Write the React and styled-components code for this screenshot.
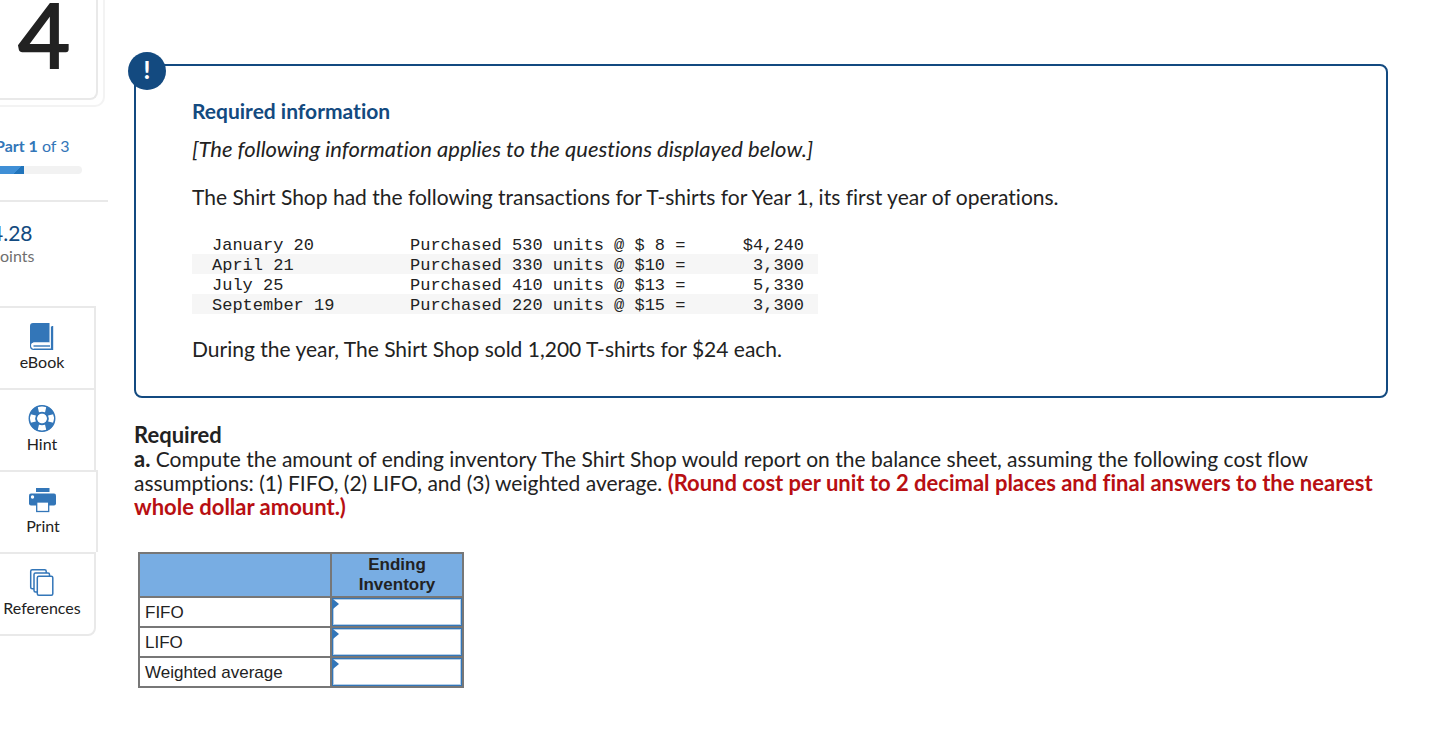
import React from "react";
import styled, { createGlobalStyle } from "styled-components";

const blue = "#3376b8";
const navy = "#134a80";
const line = "#e9e9e9";

const GlobalStyle = createGlobalStyle`
  *, *::before, *::after { box-sizing: border-box; }
  body {
    margin: 0;
    background: #fff;
    color: #222;
    font-family: Lato, "Liberation Sans", sans-serif;
    font-variant-ligatures: none;
    overflow-x: hidden;
  }
`;

const Page = styled.div`
  display: flex;
  align-items: flex-start;
`;

const Sidebar = styled.aside`
  flex: 0 0 120px;
  margin-left: -12px;
`;

const NumberFrame = styled.div`
  width: 117px;
  padding-right: 5px;
  padding-bottom: 5px;
  border: 2px solid #f3f3f3;
  border-top: 0;
  border-radius: 0 0 10px 10px;
`;

const QuestionNumber = styled.div`
  height: 100px;
  border: 2px solid ${line};
  border-top: 0;
  border-radius: 0 0 8px 8px;
  text-align: center;
  font-size: 90px;
  line-height: 66px;
  -webkit-text-stroke: 2px #222;
`;

const PartBlock = styled.div`
  padding: 29px 26px 26px 7px;
  border-bottom: 2px solid ${line};
`;

const PartText = styled.div`
  color: ${blue};
  font-size: 16px;
  line-height: 20px;
`;

const Track = styled.div`
  height: 8px;
  margin-top: 10px;
  border-radius: 4px;
  background: #f2f2f2;
  overflow: hidden;
`;

const Fill = styled.div`
  width: 33.33%;
  height: 8px;
  background: linear-gradient(135deg, #3f8fd6 0 72%, #2174bb 72%);
`;

const Points = styled.div`
  padding: 19px 0 39px 3px;
`;

const PointValue = styled.div`
  color: ${navy};
  font-size: 21px;
  line-height: 24px;
`;

const PointLabel = styled.div`
  color: #6f6f6f;
  font-size: 16px;
  line-height: 22px;
`;

const Tools = styled.nav`
  display: flex;
  flex-direction: column;
  align-items: flex-start;
`;

const Tool = styled.button`
  display: flex;
  flex-direction: column;
  align-items: center;
  gap: 1px;
  width: ${(p) => (p.$wide ? "110px" : "108px")};
  padding: 14px 0 16px;
  border: solid ${line};
  border-width: 2px 2px ${(p) => (p.$last ? "2px" : "0")};
  border-radius: ${(p) => (p.$last ? "0 0 8px 8px" : "0")};
  background: #fff;
  color: #222;
  font-family: inherit;
  font-size: 16px;
  line-height: 20px;
  cursor: pointer;

  svg { display: block; width: 28px; height: 29px; }
`;

const Main = styled.main`
  flex: 1;
  min-width: 0;
  padding: 64px 52px 60px 26px;
  font-size: 21px;
  line-height: 24px;
`;

const InfoCard = styled.section`
  position: relative;
  padding: 33px 56px 35px;
  border: 2px solid ${navy};
  border-radius: 8px;
`;

const Alert = styled.span`
  position: absolute;
  top: -14px;
  left: -8px;
  width: 38px;
  height: 38px;
  border-radius: 50%;
  background: ${navy};
  color: #fff;
  font-size: 24px;
  font-weight: 900;
  line-height: 36px;
  text-align: center;
`;

const Heading = styled.h2`
  margin: 0;
  color: ${navy};
  font-size: 21px;
  font-weight: 700;
  line-height: 24px;
`;

const Note = styled.p`
  margin: 14px 0 24px;
  font-size: 22px;
  font-style: italic;
`;

const Text = styled.p`
  margin: 0;
`;

const Strong = styled.strong`
  color: ${(p) => (p.$alert ? "#b80f12" : "inherit")};
  font-size: 22px;
`;

const Transactions = styled.table`
  width: 626px;
  margin: 25px 0 23px;
  border-collapse: collapse;
  table-layout: fixed;
  font-family: "Liberation Mono", monospace;
  font-size: 17px;
  line-height: 17px;

  tr:nth-child(even) { background: #f6f6f6; }
  td { padding: 3px 0 0; white-space: pre; }
  td:first-child { width: 218px; padding-left: 20px; }
  td:last-child { width: 110px; padding-right: 14px; text-align: right; }
`;

const Question = styled.section`
  padding-top: 25px;
`;

const Answers = styled.table`
  width: 326px;
  margin: 33px 0 0 4px;
  border-collapse: collapse;
  table-layout: fixed;
  font-family: "Liberation Sans", Arial, sans-serif;
  font-size: 17px;
  line-height: 20px;

  th, td { border: 2px solid #777; padding: 0; }
  thead th { height: 44px; background: #78ade3; font-weight: 700; vertical-align: top; }
  thead th:last-child { width: 132px; padding: 1px 24px 0; }
  tbody th { height: 30px; padding: 2px 0 0 5px; font-weight: 400; text-align: left; }
`;

const AnswerCell = styled.div`
  position: relative;

  &::before {
    content: "";
    position: absolute;
    top: 1px;
    left: 1px;
    border-left: 6px solid ${blue};
    border-top: 5px solid transparent;
    border-bottom: 5px solid transparent;
  }
`;

const AnswerInput = styled.input`
  display: block;
  width: 100%;
  height: 28px;
  padding: 0 10px;
  border: 1px solid ${blue};
  border-radius: 0;
  box-shadow: inset 0 0 0 1px #b5cfe8;
  background: #fff;
  font: inherit;
  text-align: right;
  outline: none;
`;

const BookIcon = () => (
  <svg viewBox="0 0 28 29" aria-hidden="true">
    <path d="M5 1h16.500v19.500H5.500L2 22.500V4q0-3 3-3z" fill={blue} />
    <path d="M24.500 4v23.300H5.500Q2.700 27.300 2.700 24.500V21" fill="none" stroke={blue} strokeWidth="1.400" />
    <path d="M23.600 4.500V27" stroke={blue} strokeWidth="1.400" />
    <path d="M21.500 21H6.500Q3.800 21 3.800 23.500T6 26" fill="none" stroke="#fff" strokeWidth="1.200" />
    <path d="M5.500 24h16.500" stroke={blue} strokeWidth="1.400" />
  </svg>
);

const RingIcon = () => (
  <svg viewBox="0 0 28 29" aria-hidden="true">
    <circle cx="14" cy="14.500" r="9" fill="none" stroke={blue} strokeWidth="8" />
    <g fill="#fff">
      <path d="M9.800 3.200Q14 1.400 18.200 3.200L17 8.400Q14 7.300 11 8.400z" />
      <path d="M9.800 3.200Q14 1.400 18.200 3.200L17 8.400Q14 7.300 11 8.400z" transform="rotate(90 14 14.500)" />
      <path d="M9.800 3.200Q14 1.400 18.200 3.200L17 8.400Q14 7.300 11 8.400z" transform="rotate(180 14 14.500)" />
      <path d="M9.800 3.200Q14 1.400 18.200 3.200L17 8.400Q14 7.300 11 8.400z" transform="rotate(270 14 14.500)" />
    </g>
    <circle cx="14" cy="14.500" r="12.800" fill="none" stroke={blue} strokeWidth="1.300" />
    <circle cx="14" cy="14.500" r="5.800" fill="none" stroke={blue} strokeWidth="1.300" />
  </svg>
);

const PrintIcon = () => (
  <svg viewBox="0 0 28 29" aria-hidden="true">
    <rect x="7" y="2" width="13.500" height="4" fill={blue} />
    <rect x="0" y="7.500" width="27" height="12" rx="2" fill={blue} />
    <circle cx="3.500" cy="11" r="1.700" fill="#fff" />
    <rect x="7.700" y="16" width="12" height="9.500" fill="#fff" stroke={blue} strokeWidth="1.300" />
  </svg>
);

const PagesIcon = () => (
  <svg viewBox="0 0 28 29" fill="#fff" stroke={blue} strokeWidth="1.500" aria-hidden="true">
    <rect x="2.700" y="1.700" width="15.500" height="19" rx="1.500" />
    <rect x="6" y="5" width="15.500" height="19" rx="1.500" />
    <rect x="9.300" y="8.300" width="15.500" height="19" rx="1.500" />
  </svg>
);

const transactions = [
  ["January 20", "Purchased 530 units @ $ 8 =", "$4,240"],
  ["April 21", "Purchased 330 units @ $10 =", "3,300"],
  ["July 25", "Purchased 410 units @ $13 =", "5,330"],
  ["September 19", "Purchased 220 units @ $15 =", "3,300"],
];

const methods = ["FIFO", "LIFO", "Weighted average"];

export default function App() {
  return (
    <>
      <GlobalStyle />
      <Page>
        <Sidebar>
          <NumberFrame>
            <QuestionNumber>4</QuestionNumber>
          </NumberFrame>
          <PartBlock>
            <PartText><b>Part 1</b> of 3</PartText>
            <Track><Fill /></Track>
          </PartBlock>
          <Points>
            <PointValue>4.28</PointValue>
            <PointLabel>points</PointLabel>
          </Points>
          <Tools>
            <Tool type="button"><BookIcon />eBook</Tool>
            <Tool type="button"><RingIcon />Hint</Tool>
            <Tool type="button" $wide><PrintIcon />Print</Tool>
            <Tool type="button" $last><PagesIcon />References</Tool>
          </Tools>
        </Sidebar>
        <Main>
          <InfoCard>
            <Alert>!</Alert>
            <Heading>Required information</Heading>
            <Note>[The following information applies to the questions displayed below.]</Note>
            <Text>The Shirt Shop had the following transactions for T-shirts for Year 1, its first year of operations.</Text>
            <Transactions>
              <tbody>
                {transactions.map(([date, detail, total]) => (
                  <tr key={date}>
                    <td>{date}</td>
                    <td>{detail}</td>
                    <td>{total}</td>
                  </tr>
                ))}
              </tbody>
            </Transactions>
            <Text>During the year, The Shirt Shop sold 1,200 T-shirts for $24 each.</Text>
          </InfoCard>
          <Question>
            <Text><Strong>Required</Strong></Text>
            <Text>
              <Strong>a.</Strong> Compute the amount of ending inventory The Shirt Shop would report on the balance sheet, assuming the following cost flow assumptions: (1) FIFO, (2) LIFO, and (3) weighted average.{" "}
              <Strong $alert>(Round cost per unit to 2 decimal places and final answers to the nearest whole dollar amount.)</Strong>
            </Text>
            <Answers>
              <thead>
                <tr>
                  <th />
                  <th scope="col">Ending Inventory</th>
                </tr>
              </thead>
              <tbody>
                {methods.map((method, i) => (
                  <tr key={method}>
                    <th scope="row"><label htmlFor={`answer-${i}`}>{method}</label></th>
                    <td>
                      <AnswerCell><AnswerInput id={`answer-${i}`} type="text" /></AnswerCell>
                    </td>
                  </tr>
                ))}
              </tbody>
            </Answers>
          </Question>
        </Main>
      </Page>
    </>
  );
}
